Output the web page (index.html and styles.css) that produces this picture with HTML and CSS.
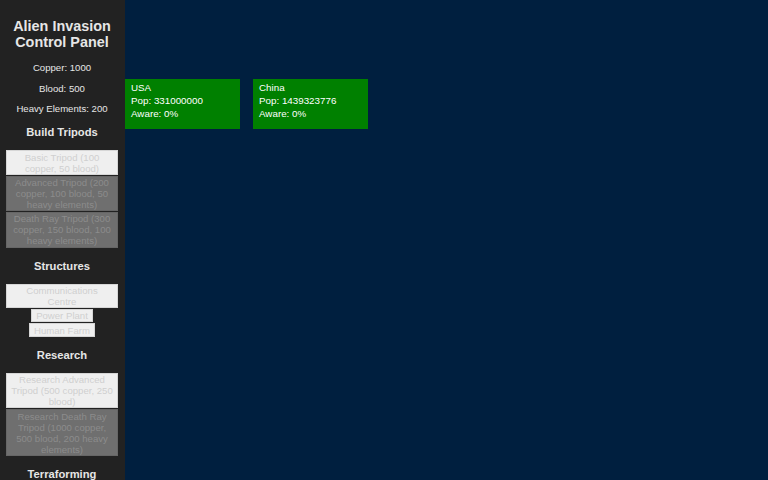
FILE: index.html
```html
<!DOCTYPE html>
<html lang="en">
<head>
<meta charset="utf-8">
<title>Alien Invasion Control Panel</title>
<link rel="stylesheet" href="styles.css">
</head>
<body>
<div class="app">
  <aside class="sidebar">
    <h2 class="title">Alien Invasion Control Panel</h2>
    <p class="res">Copper: 1000</p>
    <p class="res">Blood: 500</p>
    <p class="res">Heavy Elements: 200</p>

    <h3 class="section">Build Tripods</h3>
    <div class="btns">
      <button class="btn">Basic Tripod (100 copper, 50 blood)</button>
      <button class="btn off">Advanced Tripod (200 copper, 100 blood, 50 heavy elements)</button>
      <button class="btn off">Death Ray Tripod (300 copper, 150 blood, 100 heavy elements)</button>
    </div>

    <h3 class="section">Structures</h3>
    <div class="btns">
      <button class="btn">Communications Centre</button>
      <button class="btn">Power Plant</button>
      <button class="btn">Human Farm</button>
    </div>

    <h3 class="section">Research</h3>
    <div class="btns">
      <button class="btn">Research Advanced Tripod (500 copper, 250 blood)</button>
      <button class="btn off">Research Death Ray Tripod (1000 copper, 500 blood, 200 heavy elements)</button>
    </div>

    <h3 class="section">Terraforming</h3>
  </aside>
  <main class="map">
    <div class="country">
      <div>USA</div>
      <div>Pop: 331000000</div>
      <div>Aware: 0%</div>
    </div>
    <div class="country">
      <div>China</div>
      <div>Pop: 1439323776</div>
      <div>Aware: 0%</div>
    </div>
  </main>
</div>
</body>
</html>
```

FILE: styles.css
```css
html, body {
  margin: 0;
  padding: 0;
  height: 100%;
  overflow: hidden;
}
body {
  font-family: "Liberation Sans", Arial, sans-serif;
  font-size: 9.6px;
  background: #001f3f;
  color: #fff;
}
.app {
  display: flex;
  height: 100vh;
}
.sidebar {
  width: 112px;
  flex: 0 0 auto;
  padding: 6px 7px 6px 6px;
  background: #222222;
  color: #e6e6e6;
  text-align: center;
  overflow: hidden;
}
.title {
  font-size: 14.4px;
  font-weight: bold;
  margin: 12px 0;
  line-height: normal;
}
.res {
  margin: 9.6px 0;
  line-height: normal;
}
.section {
  font-size: 11.2px;
  font-weight: bold;
  margin: 12px 0 11.2px;
  line-height: normal;
}
.btns {
  display: flex;
  flex-direction: column;
  align-items: center;
  gap: 1px;
  padding-top: 1px;
}
.btn {
  font-family: "Liberation Sans", Arial, sans-serif;
  font-size: 9.6px;
  line-height: normal;
  max-width: 100%;
  padding: 0.2px 4px;
  margin: 0;
  border: 1px solid #d6d6d6;
  background: #efefef;
  color: #cfcfcf;
  text-align: center;
}
.btn.off {
  background: #6f6f6f;
  border-color: #666666;
  color: #8c8c8c;
}
.map {
  flex: 1;
  display: flex;
  align-items: flex-start;
  gap: 13px;
  padding-top: 79px;
}
.country {
  width: 103px;
  height: 44px;
  padding: 3px 6px;
  background: #008000;
  color: #fff;
  font-size: 9.8px;
  line-height: 12.8px;
}
```
